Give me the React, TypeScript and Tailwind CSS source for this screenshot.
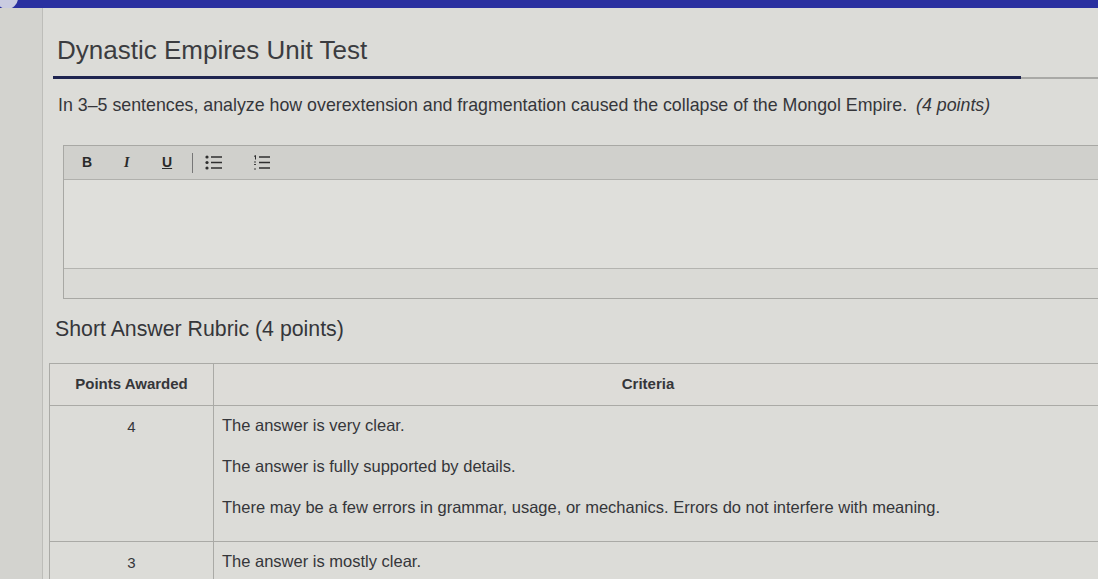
import React from "react";

const rubric = [
  {
    points: "4",
    criteria: [
      "The answer is very clear.",
      "The answer is fully supported by details.",
      "There may be a few errors in grammar, usage, or mechanics. Errors do not interfere with meaning.",
    ],
  },
  { points: "3", criteria: ["The answer is mostly clear."] },
];

const BulletIcon = () => (
  <svg width="18" height="15" viewBox="0 0 18 15" fill="none">
    <circle cx="2" cy="2" r="1.6" fill="#2f2f2f" />
    <circle cx="2" cy="7.5" r="1.6" fill="#2f2f2f" />
    <circle cx="2" cy="13" r="1.6" fill="#2f2f2f" />
    <path d="M6 2h11M6 7.5h11M6 13h11" stroke="#2f2f2f" strokeWidth="1.7" />
  </svg>
);

const NumberIcon = () => (
  <svg width="18" height="15" viewBox="0 0 18 15" fill="none">
    <path d="M1 1.5l1.5-1v4" stroke="#2f2f2f" strokeWidth="1" />
    <path d="M1 7h2M1 9.5h2M1 14h2" stroke="#2f2f2f" strokeWidth="0.9" />
    <path d="M6 2h11M6 7.5h11M6 13h11" stroke="#2f2f2f" strokeWidth="1.7" />
  </svg>
);

export default function App() {
  return (
    <div
      className="w-[1098px] h-[579px] overflow-hidden bg-[#d6d6d2] text-[#35363a]"
      style={{ fontFamily: '"Liberation Sans", Arial, sans-serif' }}
    >
      <div className="h-[8px] bg-[#2a30a0] flex items-center">
        <div className="w-[22px] h-[22px] rounded-full bg-[#c9cbe0] -ml-[4px] -mt-[12px]" />
      </div>
      <div className="flex h-[571px]">
        <div className="w-[42px] shrink-0 bg-[#d3d3cf]" />
        <div className="flex-1 border-l border-[#bdbdb9] bg-[#dcdcd8] pt-[27px] overflow-hidden">
          <h1 className="pl-[14px] text-[26px] leading-[30px] text-[#3b3c40]">
            Dynastic Empires Unit Test
          </h1>
          <div className="flex mt-[11px] ml-[10px] items-center">
            <div className="w-[968px] h-[3px] bg-[#1e2450]" />
            <div className="flex-1 h-[2px] bg-[#a9a9a6]" />
          </div>
          <p className="pl-[15px] mt-[15px] text-[17.8px] leading-[22px] whitespace-nowrap">
            In 3–5 sentences, analyze how overextension and fragmentation caused the collapse of the Mongol Empire.{" "}
            <span className="italic ml-[4px]">(4 points)</span>
          </p>
          <div className="ml-[20px] mt-[29px] w-[1100px] border border-[#a8a8a4]">
            <div className="h-[34px] bg-[#d0d0cc] border-b border-[#b0b0ac] flex items-center pl-[18px] text-[14px] text-[#2a2a2a]">
              <span className="font-bold w-[40px]">B</span>
              <span className="italic font-bold w-[40px] pl-[2px]" style={{ fontFamily: '"Liberation Serif", serif' }}>
                I
              </span>
              <span className="underline font-bold w-[30px]">U</span>
              <div className="w-px h-[20px] bg-[#777] mr-[12px]" />
              <div className="w-[48px]">
                <BulletIcon />
              </div>
              <NumberIcon />
            </div>
            <div className="h-[89px] bg-[#dfdfdb] border-b border-[#b4b4b0]" />
            <div className="h-[29px] bg-[#dadad6]" />
          </div>
          <h2 className="pl-[12px] mt-[17px] text-[21.3px] leading-[26px]">
            Short Answer Rubric (4 points)
          </h2>
          <table className="ml-[6px] mt-[21px] w-[1100px] border-collapse text-[16.5px]">
            <thead>
              <tr className="h-[42px] bg-[#dddcd8]">
                <th className="w-[164px] border border-[#aaaaa6] font-bold text-[15px] text-center">
                  Points Awarded
                </th>
                <th className="border border-[#aaaaa6] font-bold text-[15px] text-center pr-[66px]">Criteria</th>
              </tr>
            </thead>
            <tbody>
              {rubric.map((row) => (
                <tr key={row.points} className="align-top">
                  <td className="border border-[#aaaaa6] text-center pt-[10px] text-[15px]">{row.points}</td>
                  <td className="border border-[#aaaaa6] pl-[8px] pt-[9px] pb-[24px] whitespace-nowrap">
                    {row.criteria.map((c) => (
                      <div key={c} className="leading-[20px] mb-[21px] last:mb-0">
                        {c}
                      </div>
                    ))}
                  </td>
                </tr>
              ))}
            </tbody>
          </table>
        </div>
      </div>
    </div>
  );
}
